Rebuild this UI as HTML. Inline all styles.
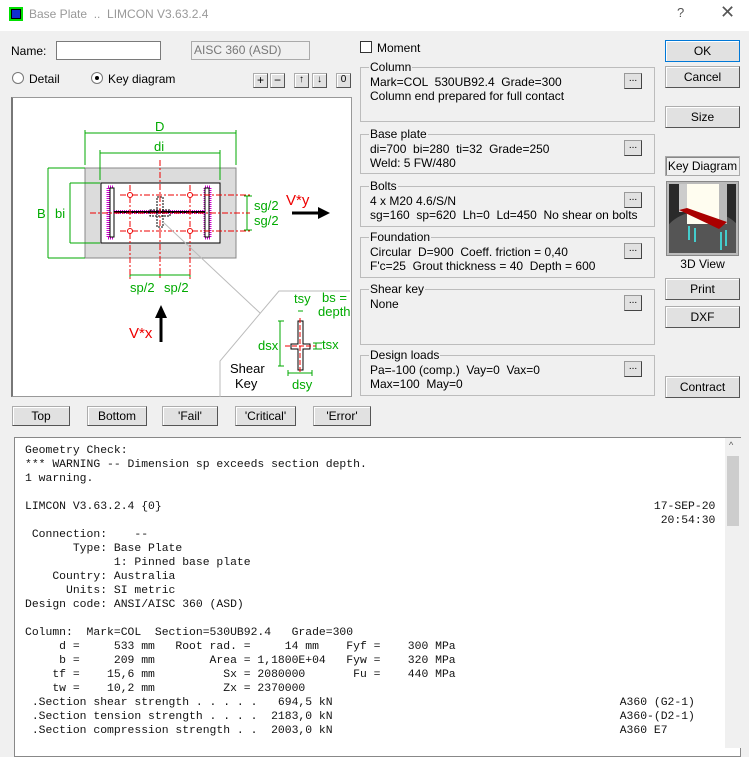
<!DOCTYPE html>
<html><head><style>
*{box-sizing:border-box;margin:0;padding:0}
body{width:749px;height:748px;background:#f0f0f0;font-family:"Liberation Sans",sans-serif;font-size:12px;color:#000;position:relative;overflow:hidden}
.a{position:absolute}
.btn{position:absolute;background:#e1e1e1;border:1px solid #adadad;border-right-color:#555;border-bottom-color:#555;box-shadow:inset 1px 1px 0 #fff;text-align:center;font-size:12px;line-height:18px}
.grp{position:absolute;left:360px;width:295px;border:1px solid #bcbcbc}
.grp .t{position:absolute;left:8px;top:-8px;background:#f0f0f0;padding:0 1px;line-height:14px}
.grp .c{position:absolute;left:9px;top:7px;line-height:14px;white-space:pre}
.grp .d{position:absolute;right:12px;top:5px;width:18px;height:16px;background:#e1e1e1;border:1px solid #999;border-right-color:#444;border-bottom-color:#444;font-size:10px;line-height:10px;text-align:center}
pre{font-family:"Liberation Mono",monospace;font-size:11.4px;line-height:14px;color:#111}
</style></head><body>
<div class="a" style="left:0;top:0;width:749px;height:31px;background:#fff"></div>
<div class="a" style="left:9px;top:7px;width:14px;height:14px;background:#00e000;"><div style="margin:2px;width:10px;height:10px;background:#1030d0;border:1px solid #000"></div></div>
<div class="a" style="left:29px;top:7px;color:#999;font-size:12px">Base Plate &nbsp;.. &nbsp;LIMCON V3.63.2.4</div>
<div class="a" style="left:677px;top:5px;color:#555;font-size:13px">?</div>
<div class="a" style="left:720px;top:2px;color:#555;font-size:18px">✕</div>

<div class="a" style="left:11px;top:44px">Name:</div>
<div class="a" style="left:56px;top:41px;width:105px;height:19px;background:#fff;border:1px solid #7a7a7a"></div>
<div class="a" style="left:191px;top:41px;width:119px;height:19px;border:1px solid #aaa;color:#777;padding-left:2px;line-height:17px">AISC 360 (ASD)</div>

<div class="a" style="left:12px;top:72px;width:12px;height:12px;border-radius:50%;background:#fff;border:1px solid #777"></div>
<div class="a" style="left:29px;top:72px">Detail</div>
<div class="a" style="left:91px;top:72px;width:12px;height:12px;border-radius:50%;background:#fff;border:1px solid #777"><div style="margin:3px;width:4px;height:4px;border-radius:50%;background:#000"></div></div>
<div class="a" style="left:108px;top:72px">Key diagram</div>
<div class="btn" style="left:253px;top:73px;width:15px;height:15px;line-height:12px">+</div>
<div class="btn" style="left:270px;top:73px;width:15px;height:15px;line-height:12px">−</div>
<div class="btn" style="left:294px;top:73px;width:15px;height:15px;line-height:12px;font-size:10px">↑</div>
<div class="btn" style="left:312px;top:73px;width:15px;height:15px;line-height:12px;font-size:10px">↓</div>
<div class="btn" style="left:336px;top:73px;width:15px;height:15px;line-height:12px;font-size:10px">0</div>

<div class="a" style="left:11px;top:97px;width:341px;height:300px;background:#fff;border:1px solid #999;border-left:2px solid #777"></div>
<svg class="a" style="left:0;top:0" width="360" height="400" font-family="Liberation Sans" font-size="13">
<rect x="85" y="168" width="151" height="90" fill="#dcdcdc" stroke="#888"/>
<rect x="101" y="183" width="119" height="60" fill="#fff" stroke="#000"/>
<g stroke="#0a0" fill="none">
<path d="M85 133H236M85 130V165M236 130V165M100 153H220M100 150V180M220 150V180M48 168H85M48 258H85M48 168V258M70 183H100M70 243H100M70 183V243M130 275H190M130 272V278M160 272V278M190 272V278M247 196V230M244 196H252M244 230H252"/>
</g>
<g fill="#0a0"><text x="155" y="131">D</text><text x="154" y="151">di</text><text x="37" y="218">B</text><text x="55" y="218">bi</text><text x="254" y="210">sg/2</text><text x="254" y="225">sg/2</text><text x="130" y="292">sp/2</text><text x="164" y="292">sp/2</text></g>
<rect x="108" y="187" width="5" height="51" fill="none" stroke="#c0c" stroke-width="3" stroke-dasharray="1 1"/>
<rect x="205" y="187" width="5" height="51" fill="none" stroke="#c0c" stroke-width="3" stroke-dasharray="1 1"/>
<rect x="110" y="188" width="4" height="49" fill="#fff" stroke="#000"/>
<rect x="205" y="188" width="4" height="49" fill="#fff" stroke="#000"/>
<path d="M114 212H205" stroke="#c0c" stroke-width="4" stroke-dasharray="1 1"/>
<path d="M114 212H205" stroke="#000" stroke-width="2"/>
<rect x="157" y="197" width="6" height="30" fill="none" stroke="#000" stroke-dasharray="2 1"/>
<rect x="150" y="210" width="20" height="6" fill="none" stroke="#000" stroke-dasharray="2 1"/>
<g stroke="#e00" fill="none" stroke-dasharray="6 2 2 2"><path d="M160 160V280M90 213H250M120 195H250M120 231H250M130 185V280M190 185V280"/></g>
<g stroke="#e00" fill="#fff"><circle cx="130" cy="195" r="2.5"/><circle cx="190" cy="195" r="2.5"/><circle cx="130" cy="231" r="2.5"/><circle cx="190" cy="231" r="2.5"/></g>
<text x="286" y="205" fill="#e00" font-size="15">V*y</text>
<path d="M292 213H318" stroke="#000" stroke-width="3"/><path d="M318 207L330 213L318 219Z"/>
<text x="129" y="338" fill="#e00" font-size="15">V*x</text>
<path d="M161 342V318" stroke="#000" stroke-width="3"/><path d="M155 318L161 305L167 318Z"/>
<path d="M163 222L260 313" stroke="#bbb"/>
<path d="M350 291H279L220 361V397" stroke="#bbb" fill="none"/>
<text x="230" y="373">Shear</text><text x="235" y="388">Key</text>
<path d="M298 321h5v23h7v5h-7v21h-5v-21h-7v-5h7z" fill="#fff" stroke="#000"/>
<path d="M300 318V372M285 346H316" stroke="#e00" stroke-dasharray="5 2"/>
<g stroke="#0a0" fill="none"><path d="M280 321V366M278 321H284M278 366H284M288 373H312M288 370V376M312 370V376M298 311H303M316 343V349M313 343H322M313 349H322"/></g>
<g fill="#0a0"><text x="294" y="303">tsy</text><text x="322" y="302">bs =</text><text x="318" y="316">depth</text><text x="258" y="350">dsx</text><text x="322" y="349">tsx</text><text x="292" y="389">dsy</text></g>
</svg>

<div class="a" style="left:360px;top:41px;width:12px;height:12px;background:#fff;border:1px solid #333"></div>
<div class="a" style="left:377px;top:41px">Moment</div>

<div class="grp" style="top:67px;height:55px"><span class="t">Column</span><div class="c">Mark=COL  530UB92.4  Grade=300
Column end prepared for full contact</div><div class="d">...</div></div>
<div class="grp" style="top:134px;height:40px"><span class="t">Base plate</span><div class="c">di=700  bi=280  ti=32  Grade=250
Weld: 5 FW/480</div><div class="d">...</div></div>
<div class="grp" style="top:186px;height:41px"><span class="t">Bolts</span><div class="c">4 x M20 4.6/S/N
sg=160  sp=620  Lh=0  Ld=450  No shear on bolts</div><div class="d">...</div></div>
<div class="grp" style="top:237px;height:41px"><span class="t">Foundation</span><div class="c">Circular  D=900  Coeff. friction = 0,40
F'c=25  Grout thickness = 40  Depth = 600</div><div class="d">...</div></div>
<div class="grp" style="top:289px;height:56px"><span class="t">Shear key</span><div class="c">None</div><div class="d">...</div></div>
<div class="grp" style="top:355px;height:41px"><span class="t">Design loads</span><div class="c">Pa=-100 (comp.)  Vay=0  Vax=0
Max=100  May=0</div><div class="d">...</div></div>

<div class="btn" style="left:665px;top:40px;width:75px;height:22px;border:1px solid #0078d7;line-height:20px">OK</div>
<div class="btn" style="left:665px;top:66px;width:75px;height:22px;line-height:20px">Cancel</div>
<div class="btn" style="left:665px;top:106px;width:75px;height:22px;line-height:20px">Size</div>
<div class="a" style="left:665px;top:156px;width:75px;height:20px;border:1px solid #aaa;box-shadow:inset 1px 1px 0 #888;text-align:center;line-height:18px">Key Diagram</div>
<div class="a" style="left:666px;top:181px;width:73px;height:75px;background:#bbb;border:1px solid #888;padding:2px">
<svg width="67" height="69"><rect width="67" height="69" fill="#2a2a2a"/><ellipse cx="34" cy="55" rx="40" ry="28" fill="#555"/><rect x="10" y="0" width="8" height="28" fill="#ccc"/><rect x="18" y="0" width="32" height="40" fill="#fffdf0"/><rect x="50" y="0" width="8" height="40" fill="#bbb"/><path d="M10 26L18 24L58 38L50 45Z" fill="#a00"/><path d="M20 42v14M26 44v14M52 48v18M57 46v16" stroke="#4cc" stroke-width="2"/></svg></div>
<div class="a" style="left:665px;top:257px;width:75px;text-align:center">3D View</div>
<div class="btn" style="left:665px;top:278px;width:75px;height:22px;line-height:20px">Print</div>
<div class="btn" style="left:665px;top:306px;width:75px;height:22px;line-height:20px">DXF</div>
<div class="btn" style="left:665px;top:376px;width:75px;height:22px;line-height:20px">Contract</div>

<div class="btn" style="left:12px;top:406px;width:58px;height:20px">Top</div>
<div class="btn" style="left:87px;top:406px;width:60px;height:20px">Bottom</div>
<div class="btn" style="left:162px;top:406px;width:56px;height:20px">'Fail'</div>
<div class="btn" style="left:235px;top:406px;width:61px;height:20px">'Critical'</div>
<div class="btn" style="left:313px;top:406px;width:58px;height:20px">'Error'</div>

<div class="a" style="left:14px;top:437px;width:727px;height:320px;background:#fff;border:1px solid #888"></div>
<div class="a" style="left:725px;top:438px;width:16px;height:310px;background:#f0f0f0"></div>
<div class="a" style="left:727px;top:456px;width:12px;height:70px;background:#cdcdcd"></div>
<div class="a" style="left:729px;top:440px;font-size:9px;color:#555">^</div>
<pre class="a" style="left:25px;top:444px">Geometry Check:
*** WARNING -- Dimension sp exceeds section depth.
1 warning.

LIMCON V3.63.2.4 {0}                                                                        17-SEP-20
                                                                                             20:54:30
 Connection:    --
       Type: Base Plate
             1: Pinned base plate
    Country: Australia
      Units: SI metric
Design code: ANSI/AISC 360 (ASD)

Column:  Mark=COL  Section=530UB92.4   Grade=300
     d =     533 mm   Root rad. =     14 mm    Fyf =    300 MPa
     b =     209 mm        Area = 1,1800E+04   Fyw =    320 MPa
    tf =    15,6 mm          Sx = 2080000       Fu =    440 MPa
    tw =    10,2 mm          Zx = 2370000
 .Section shear strength . . . . .   694,5 kN                                          A360 (G2-1)
 .Section tension strength . . . .  2183,0 kN                                          A360-(D2-1)
 .Section compression strength . .  2003,0 kN                                          A360 E7</pre>
</body></html>
